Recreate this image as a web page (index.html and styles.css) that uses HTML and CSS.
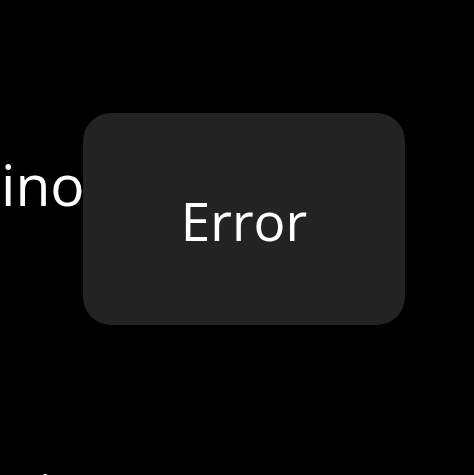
FILE: index.html
```html
<!DOCTYPE html>
<html>
<head>
<meta charset="utf-8">
<link rel="stylesheet" href="styles.css">
</head>
<body>
<main class="screen">
  <p class="line">ino</p>
  <p class="line line-next">i</p>
</main>
<div class="toast">
  <span class="toast-text">Error</span>
</div>
</body>
</html>
```
FILE: styles.css
```css
html, body {
  margin: 0;
  padding: 0;
  background: #000;
  width: 474px;
  height: 475px;
  overflow: hidden;
}
.screen {
  padding-top: 156px;
  font-family: "Open Sans", "Noto Sans", sans-serif;
  color: #fff;
}
.line {
  margin: 0;
  padding-left: 1px;
  font-size: 57px;
  line-height: 57px;
  white-space: nowrap;
}
.line-next {
  margin-top: 253px;
  padding-left: 38px;
}
.toast {
  position: absolute;
  left: 83px;
  top: 113px;
  width: 322px;
  height: 212px;
  border-radius: 28px;
  background: #232323;
  display: flex;
  align-items: center;
  justify-content: center;
}
.toast-text {
  font-family: "Open Sans", "Noto Sans", sans-serif;
  font-size: 53px;
  line-height: 53px;
  color: #fff;
  margin-top: 2px;
}
```
